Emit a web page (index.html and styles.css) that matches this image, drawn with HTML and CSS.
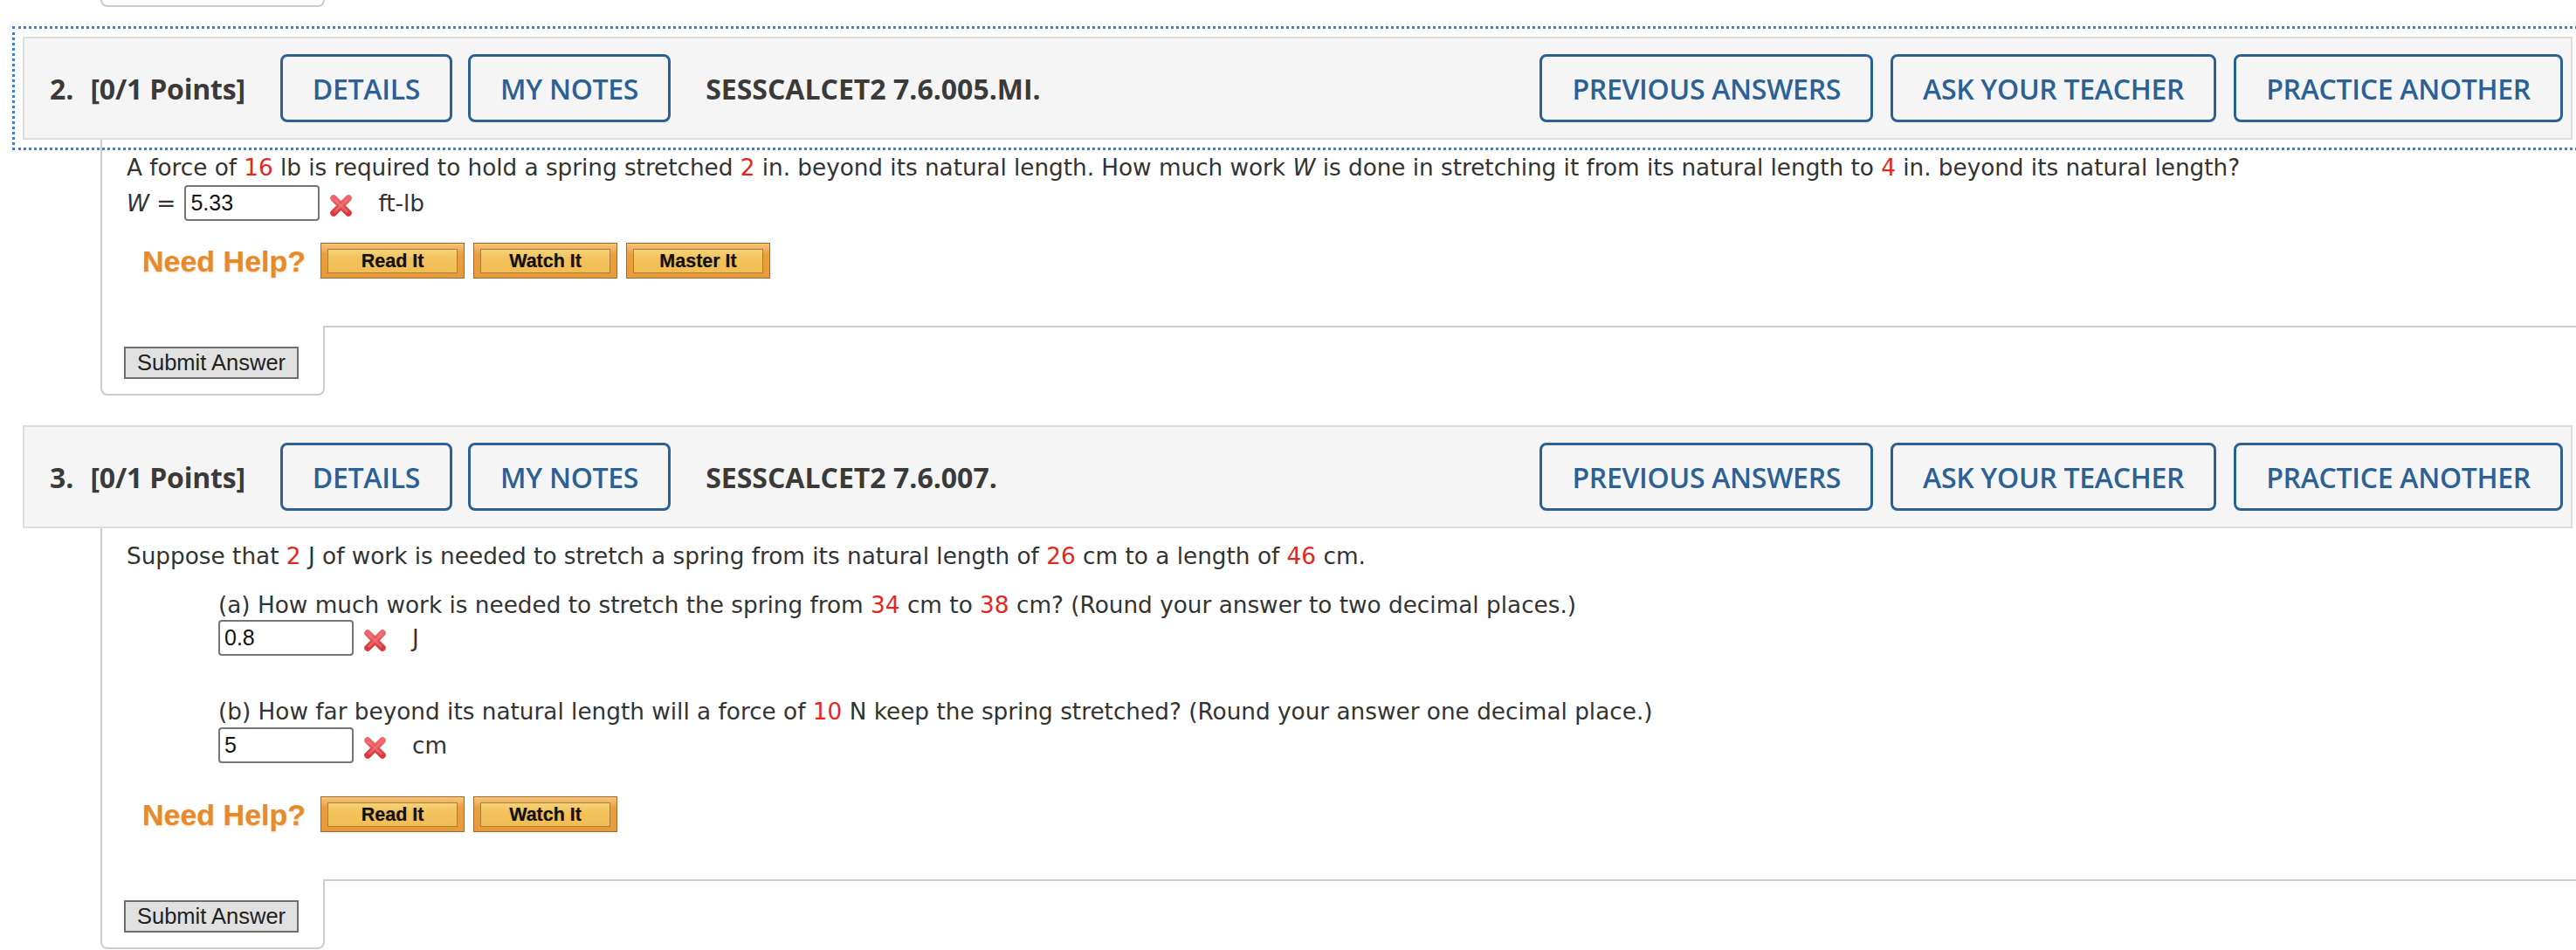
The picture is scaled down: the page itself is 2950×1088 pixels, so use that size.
FILE: index.html
```html
<!DOCTYPE html>
<html lang="en">
<head>
<meta charset="utf-8">
<title>WebAssign questions</title>
<link rel="stylesheet" href="styles.css">
</head>
<body>
<div class="prev-tab"></div>

<section class="question">
  <div class="q-header focused">
    <span class="q-num">2.</span><span class="q-points">[0/1 Points]</span>
    <button class="hbtn">DETAILS</button><button class="hbtn">MY NOTES</button>
    <span class="q-code">SESSCALCET2 7.6.005.MI.</span>
    <div class="hright">
      <button class="hbtn">PREVIOUS ANSWERS</button>
      <button class="hbtn">ASK YOUR TEACHER</button>
      <button class="hbtn">PRACTICE ANOTHER</button>
    </div>
  </div>
  <div class="q-body body2">
    <p class="line">A force of <span class="red">16</span> lb is required to hold a spring stretched <span class="red">2</span> in. beyond its natural length. How much work <i>W</i> is done in stretching it from its natural length to <span class="red">4</span> in. beyond its natural length?</p>
    <div class="ans-row r-w">
      <span class="lbl"><i>W</i> =</span>
      <span class="inbox">5.33</span>
      <svg class="xmark" width="27" height="27" viewBox="0 0 27 27" aria-hidden="true">
        <defs><linearGradient id="xg1" x1="0" y1="0" x2="0" y2="1"><stop offset="0" stop-color="#f0686c"/><stop offset="1" stop-color="#d9383e"/></linearGradient></defs>
        <path d="M5 5 L22 22 M22 5 L5 22" stroke="url(#xg1)" stroke-width="7.5" stroke-linecap="round" fill="none"/>
        <path d="M6.5 7 L20.5 20.5 M20.5 7 L6.5 20.5" stroke="#f58a8d" stroke-width="2" stroke-linecap="round" fill="none" opacity="0.55"/>
      </svg>
      <span class="unit">ft-lb</span>
    </div>
    <div class="help-row h2">
      <span class="need">Need Help?</span>
      <span class="hb"><span>Read It</span></span>
      <span class="hb"><span>Watch It</span></span>
      <span class="hb"><span>Master It</span></span>
    </div>
  </div>
  <div class="q-foot">
    <div class="tab"><button class="submit">Submit Answer</button></div>
    <div class="filler"></div>
  </div>
</section>

<section class="question">
  <div class="q-header">
    <span class="q-num">3.</span><span class="q-points">[0/1 Points]</span>
    <button class="hbtn">DETAILS</button><button class="hbtn">MY NOTES</button>
    <span class="q-code">SESSCALCET2 7.6.007.</span>
    <div class="hright">
      <button class="hbtn">PREVIOUS ANSWERS</button>
      <button class="hbtn">ASK YOUR TEACHER</button>
      <button class="hbtn">PRACTICE ANOTHER</button>
    </div>
  </div>
  <div class="q-body body3">
    <p class="line">Suppose that <span class="red">2</span> J of work is needed to stretch a spring from its natural length of <span class="red">26</span> cm to a length of <span class="red">46</span> cm.</p>
    <div class="part pa">
      <p class="line">(a) How much work is needed to stretch the spring from <span class="red">34</span> cm to <span class="red">38</span> cm? (Round your answer to two decimal places.)</p>
      <div class="ans-row r-a">
        <span class="inbox">0.8</span>
        <svg class="xmark" width="27" height="27" viewBox="0 0 27 27" aria-hidden="true">
          <defs><linearGradient id="xg2" x1="0" y1="0" x2="0" y2="1"><stop offset="0" stop-color="#f0686c"/><stop offset="1" stop-color="#d9383e"/></linearGradient></defs>
          <path d="M5 5 L22 22 M22 5 L5 22" stroke="url(#xg2)" stroke-width="7.5" stroke-linecap="round" fill="none"/>
          <path d="M6.5 7 L20.5 20.5 M20.5 7 L6.5 20.5" stroke="#f58a8d" stroke-width="2" stroke-linecap="round" fill="none" opacity="0.55"/>
        </svg>
        <span class="unit">J</span>
      </div>
    </div>
    <div class="part pb">
      <p class="line">(b) How far beyond its natural length will a force of <span class="red">10</span> N keep the spring stretched? (Round your answer one decimal place.)</p>
      <div class="ans-row r-b">
        <span class="inbox">5</span>
        <svg class="xmark" width="27" height="27" viewBox="0 0 27 27" aria-hidden="true">
          <defs><linearGradient id="xg3" x1="0" y1="0" x2="0" y2="1"><stop offset="0" stop-color="#f0686c"/><stop offset="1" stop-color="#d9383e"/></linearGradient></defs>
          <path d="M5 5 L22 22 M22 5 L5 22" stroke="url(#xg3)" stroke-width="7.5" stroke-linecap="round" fill="none"/>
          <path d="M6.5 7 L20.5 20.5 M20.5 7 L6.5 20.5" stroke="#f58a8d" stroke-width="2" stroke-linecap="round" fill="none" opacity="0.55"/>
        </svg>
        <span class="unit">cm</span>
      </div>
    </div>
    <div class="help-row h3">
      <span class="need">Need Help?</span>
      <span class="hb"><span>Read It</span></span>
      <span class="hb"><span>Watch It</span></span>
    </div>
  </div>
  <div class="q-foot">
    <div class="tab"><button class="submit">Submit Answer</button></div>
    <div class="filler"></div>
  </div>
</section>
</body>
</html>
```
FILE: styles.css
```css
html, body {
  margin: 0;
  padding: 0;
  background: #fff;
}
body {
  font-family: "DejaVu Sans", Verdana, sans-serif;
  color: #333;
  overflow: hidden;
  width: 2950px;
}

.prev-tab {
  margin-left: 115px;
  width: 257px;
  height: 8px;
  box-sizing: border-box;
  border: 2px solid #ccc;
  border-top: 0;
  border-radius: 0 0 8px 8px;
}

.question {
  margin-top: 34px;
}

/* ---------- header ---------- */
.q-header {
  margin-left: 26px;
  margin-right: 4px;
  height: 118px;
  box-sizing: border-box;
  border: 2px solid #ddd;
  background: #f5f5f5;
  display: flex;
  align-items: center;
  padding: 0 9px 0 29px;
  font-family: "Open Sans", sans-serif;
  font-size: 32px;
  color: #3a3a3a;
}
.q-header.focused {
  outline: 3px dotted #3a7fe0;
  outline-offset: 9px;
}
.q-num {
  font-weight: 700;
  margin-right: 19px;
}
.q-points {
  font-weight: 700;
  margin-right: 40px;
  letter-spacing: -0.2px;
}
.hbtn {
  height: 78px;
  box-sizing: border-box;
  border: 3px solid #2b6194;
  border-radius: 8px;
  background: transparent;
  color: #2b6194;
  font-family: "Open Sans", sans-serif;
  font-weight: 600;
  font-size: 32px;
  padding: 0 34px;
  margin: 0 18px 0 0;
  letter-spacing: -0.3px;
  white-space: nowrap;
}
.q-code {
  margin-left: 22px;
  font-weight: 700;
}
.hright {
  margin-left: auto;
  display: flex;
  gap: 20px;
}
.hright .hbtn {
  margin: 0;
}

/* ---------- body ---------- */
.q-body {
  margin-left: 115px;
  border-left: 2px solid #ccc;
  padding: 17px 0 54px 28px;
  font-size: 26.3px;
  line-height: 30px;
}
.line {
  margin: 0;
  white-space: nowrap;
}
.body2 > .line {
  letter-spacing: -0.03px;
}
.red {
  color: #e3271d;
}
.ans-row {
  display: flex;
  align-items: center;
  height: 41px;
}
.r-w { margin-top: 5px; }
.lbl {
  margin-right: 10px;
}
.inbox {
  box-sizing: border-box;
  width: 155px;
  height: 41px;
  border: 2px solid #767676;
  border-radius: 4px;
  padding: 0 5px;
  font-family: "Liberation Sans", Arial, sans-serif;
  font-size: 25px;
  line-height: 37px;
  color: #111;
  background: #fff;
}
.xmark {
  margin-left: 11px;
  margin-top: 5px;
}
.unit {
  margin-left: 29px;
}

.part {
  margin-left: 105px;
}
.pa { margin-top: 26px; }
.pb { margin-top: 49px; }
.r-a { margin-top: 2px; }
.r-b { margin-top: 3px; }

.help-row {
  display: flex;
  align-items: center;
  margin-left: 18px;
  gap: 10px;
}
.h2 { margin-top: 25px; }
.h3 { margin-top: 38px; }
.need {
  font-family: "Liberation Sans", Arial, sans-serif;
  font-weight: 700;
  font-size: 34px;
  color: #e68a2e;
  text-shadow: 0 1px 2px rgba(240, 170, 90, 0.6);
  margin-right: 7px;
}
.hb {
  display: block;
  width: 165px;
  box-sizing: border-box;
  border: 1px solid #a3692b;
  background: linear-gradient(#f8c57c, #eb9f40 30%, #e99a3a);
  padding: 6px 7px 5px 7px;
}
.hb span {
  display: block;
  border: 1px solid #a98038;
  background: linear-gradient(#f6d27a, #f2c25b 40%, #f1be55);
  font-family: "Liberation Sans", Arial, sans-serif;
  font-weight: 700;
  font-size: 21.5px;
  line-height: 26px;
  text-align: center;
  color: #111;
  text-shadow: 0 0 1px rgba(0, 0, 0, 0.35);
}

/* ---------- footer / submit tab ---------- */
.q-foot {
  display: flex;
  margin-left: 115px;
}
.tab {
  width: 257px;
  box-sizing: border-box;
  border: 2px solid #ccc;
  border-top: 0;
  border-radius: 0 0 8px 8px;
  padding: 24px 0 17px 25px;
}
.filler {
  flex: 1;
  border-top: 2px solid #ccc;
}
.submit {
  display: block;
  height: 37px;
  box-sizing: border-box;
  border: 2px solid #6e6e6e;
  background: #e1e1e1;
  font-family: "Liberation Sans", Arial, sans-serif;
  font-size: 25.5px;
  color: #222;
  padding: 0 13px;
  margin: 0;
  border-radius: 0;
}
```
